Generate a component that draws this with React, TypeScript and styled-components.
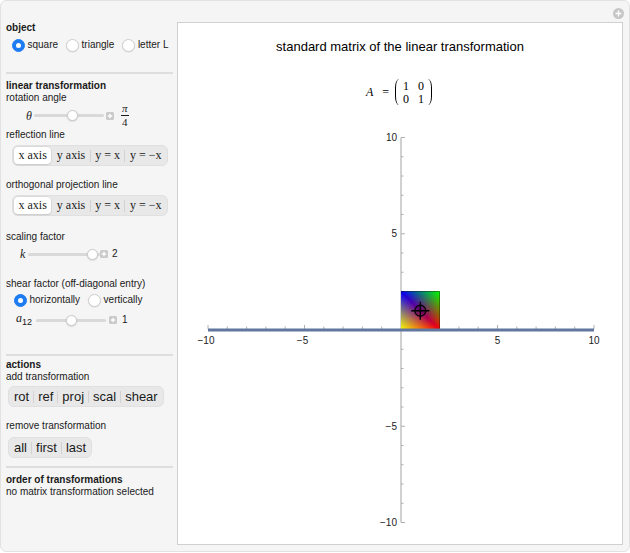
import React from 'react';
import styled, { createGlobalStyle } from 'styled-components';

/*
 * Global
 */
const GlobalStyle = createGlobalStyle`
  html, body {
    margin: 0;
    padding: 0;
    background: #ffffff;
  }
  body {
    font-family: "Liberation Sans", Arial, sans-serif;
    color: #1a1a1a;
  }
`;

const SERIF = '"Liberation Serif", "Times New Roman", serif';

/*
 * Frame
 */
const Frame = styled.div`
  width: 628px;
  height: 550px;
  background: #f5f5f5;
  border: 1px solid #e2e2e2;
  border-radius: 6px;
  display: flex;
  flex-direction: column;
  overflow: hidden;
`;

const TopBar = styled.div`
  height: 20px;
  display: flex;
  justify-content: flex-end;
  align-items: flex-start;
  padding: 7px 5px 0 0;
  box-sizing: border-box;
`;

const Body = styled.div`
  display: flex;
  align-items: flex-start;
`;

/*
 * Left controls
 */
const LeftPanel = styled.div`
  width: 176px;
  box-sizing: border-box;
  padding: 0 4px 0 5px;
  display: flex;
  flex-direction: column;
`;

const Label = styled.div<{ $mt?: number; $bold?: boolean }>`
  margin-top: ${(p) => p.$mt ?? 0}px;
  font-size: 10px;
  line-height: 12px;
  font-weight: ${(p) => (p.$bold ? 700 : 400)};
  white-space: nowrap;
`;

const Divider = styled.div<{ $mt: number }>`
  margin-top: ${(p) => p.$mt}px;
  height: 2px;
  background: #dedede;
`;

const RadioRow = styled.div<{ $mt: number; $indent: number }>`
  display: flex;
  align-items: center;
  gap: 8px;
  height: 14px;
  margin-top: ${(p) => p.$mt}px;
  padding-left: ${(p) => p.$indent}px;
`;

const RadioItem = styled.label`
  display: flex;
  align-items: center;
  gap: 2.5px;
  font-size: 10px;
  line-height: 12px;
`;

const RadioDot = styled.span<{ $on?: boolean }>`
  width: 13px;
  height: 13px;
  box-sizing: border-box;
  border-radius: 50%;
  background: ${(p) => (p.$on ? '#1d7cf2' : '#ffffff')};
  border: 1px solid ${(p) => (p.$on ? '#1d7cf2' : '#cfcfcf')};
  box-shadow: ${(p) => (p.$on ? 'none' : '0 0.5px 1px rgba(0,0,0,0.12)')};
  display: flex;
  align-items: center;
  justify-content: center;
  &::after {
    content: '';
    width: 5px;
    height: 5px;
    border-radius: 50%;
    background: #ffffff;
    display: ${(p) => (p.$on ? 'block' : 'none')};
  }
`;

const SliderRow = styled.div<{ $mt: number; $indent: number; $h: number }>`
  display: flex;
  align-items: center;
  height: ${(p) => p.$h}px;
  margin-top: ${(p) => p.$mt}px;
  padding-left: ${(p) => p.$indent}px;
`;

const VarLabel = styled.span<{ $w: number }>`
  width: ${(p) => p.$w}px;
  font-family: ${SERIF};
  font-style: italic;
  font-size: 12px;
  line-height: 14px;
  white-space: nowrap;
`;

const Sub = styled.sub`
  font-family: "Liberation Sans", Arial, sans-serif;
  font-style: normal;
  font-size: 9px;
  vertical-align: -3px;
`;

const Track = styled.div<{ $w: number }>`
  position: relative;
  width: ${(p) => p.$w}px;
  height: 3px;
  background: #d9d9d9;
  border-radius: 2px;
`;

const Thumb = styled.span`
  position: absolute;
  top: 50%;
  width: 11px;
  height: 11px;
  margin: -5.5px 0 0 -5.5px;
  box-sizing: border-box;
  border-radius: 50%;
  background: #ffffff;
  border: 1px solid #cbcbcb;
  box-shadow: 0 0.5px 1.5px rgba(0, 0, 0, 0.18);
`;

const PlusBox = styled.span<{ $ml: number }>`
  margin-left: ${(p) => p.$ml}px;
  width: 8px;
  height: 8px;
  display: flex;
`;

const Value = styled.span<{ $ml: number }>`
  margin-left: ${(p) => p.$ml}px;
  font-size: 10px;
  line-height: 12px;
`;

const Fraction = styled.span`
  display: inline-flex;
  flex-direction: column;
  align-items: center;
  font-family: ${SERIF};
  font-size: 11px;
  line-height: 11px;
`;

const FracTop = styled.span`
  font-style: italic;
  padding: 0 1px 1px;
  border-bottom: 1px solid #1a1a1a;
`;

const FracBottom = styled.span`
  padding-top: 1px;
`;

const SegGroup = styled.div<{ $mt: number; $ml: number }>`
  display: inline-flex;
  align-self: flex-start;
  align-items: center;
  margin-top: ${(p) => p.$mt}px;
  margin-left: ${(p) => p.$ml}px;
  height: 21px;
  box-sizing: border-box;
  padding: 1px;
  background: #e8e8e8;
  border: 1px solid #e0e0e0;
  border-radius: 6px;
`;

const Seg = styled.span<{ $on?: boolean; $serif?: boolean }>`
  height: 17px;
  box-sizing: border-box;
  display: flex;
  align-items: center;
  padding: 0 ${(p) => (p.$serif ? 4.5 : 4)}px;
  font-family: ${(p) => (p.$serif ? SERIF : '"Liberation Sans", Arial, sans-serif')};
  font-size: ${(p) => (p.$serif ? 12 : 13)}px;
  color: #1a1a1a;
  white-space: nowrap;
  background: ${(p) => (p.$on ? '#ffffff' : 'transparent')};
  border-radius: 4px;
  box-shadow: ${(p) => (p.$on ? '0 0 0 0.5px #cfcfcf, 0 1px 1.5px rgba(0,0,0,0.15)' : 'none')};
`;

const SegSep = styled.span<{ $hide?: boolean }>`
  width: 1px;
  height: 12px;
  background: ${(p) => (p.$hide ? 'transparent' : '#d2d2d2')};
`;

/*
 * Plot panel
 */
const PlotPanel = styled.div`
  width: 446px;
  height: 523px;
  margin-top: 1px;
  box-sizing: border-box;
  background: #ffffff;
  border: 1px solid #d0d0d0;
  display: flex;
  flex-direction: column;
`;

const Title = styled.div`
  margin-top: 16px;
  text-align: center;
  font-size: 13px;
  line-height: 16px;
  color: #000000;
`;

const MatrixRow = styled.div`
  margin-top: 24px;
  height: 26px;
  display: flex;
  justify-content: center;
  align-items: center;
  font-family: ${SERIF};
  font-size: 12px;
  color: #000000;
  padding-right: 2px;
`;

const MatName = styled.span`
  font-style: italic;
`;

const Equals = styled.span`
  margin: 0 6px 0 9px;
`;

const Paren = styled.span<{ $right?: boolean }>`
  width: 4px;
  height: 26px;
  box-sizing: border-box;
  border: 0 solid #000000;
  ${(p) => (p.$right ? 'border-right-width: 1px;' : 'border-left-width: 1px;')}
  border-radius: ${(p) => (p.$right ? '0 6px 6px 0 / 0 13px 13px 0' : '6px 0 0 6px / 13px 0 0 13px')};
`;

const MatGrid = styled.span`
  display: grid;
  grid-template-columns: auto auto;
  column-gap: 9px;
  row-gap: 1px;
  line-height: 12px;
  padding: 0 4px 0 4px;
`;

const Chart = styled.svg`
  display: block;
  margin-top: 16px;
`;

const ScreenRect = styled.rect`
  mix-blend-mode: screen;
`;

const ScreenPoly = styled.polygon`
  mix-blend-mode: screen;
`;

/*
 * Helpers
 */
const PlusIcon = () => (
  <svg width="8" height="8" viewBox="0 0 8 8">
    <rect width="8" height="8" rx="1.5" fill="#cacaca" />
    <path d="M4 1.8v4.4M1.8 4h4.4" stroke="#fff" strokeWidth="1.3" />
  </svg>
);

const CornerIcon = () => (
  <svg width="11" height="11" viewBox="0 0 11 11">
    <circle cx="5.5" cy="5.5" r="5.5" fill="#c6c6c6" />
    <path d="M5.5 2.6v5.8M2.6 5.5h5.8" stroke="#fff" strokeWidth="1.5" />
  </svg>
);

type SliderProps = {
  mt: number;
  h?: number;
  indent: number;
  label: React.ReactNode;
  labelWidth: number;
  trackWidth: number;
  pos: number;
  plusGap: number;
  valueGap: number;
  value: React.ReactNode;
};

const Slider = (props: SliderProps) => (
  <SliderRow $mt={props.mt} $indent={props.indent} $h={props.h ?? 14}>
    <VarLabel $w={props.labelWidth}>{props.label}</VarLabel>
    <Track $w={props.trackWidth}>
      <Thumb style={{ left: `${props.pos * 100}%` }} />
    </Track>
    <PlusBox $ml={props.plusGap}><PlusIcon /></PlusBox>
    <Value $ml={props.valueGap}>{props.value}</Value>
  </SliderRow>
);

const Segmented = ({ items, selected, serif, mt, ml }: {
  items: string[]; selected?: number; serif?: boolean; mt: number; ml: number;
}) => (
  <SegGroup $mt={mt} $ml={ml}>
    {items.map((x, i) => (
      <React.Fragment key={x}>
        {i > 0 && <SegSep $hide={selected !== undefined && (i === selected || i - 1 === selected)} />}
        <Seg $on={i === selected} $serif={serif}>{x}</Seg>
      </React.Fragment>
    ))}
  </SegGroup>
);

/*
 * Chart
 */
const OX = 223;
const OY = 209;
const SX = 19.3;
const SY = 19.25;
const X = (v: number) => OX + v * SX;
const Y = (v: number) => OY - v * SY;
const range = Array.from({ length: 21 }, (_, i) => i - 10);

const Plot = () => {
  const w = 2 * SX;
  const h = 2 * SY;
  const x0 = X(0);
  const y0 = Y(2);
  const cx = X(1);
  const cy = Y(1);
  return (
    <Chart width="444" height="416" viewBox="0 0 444 416">
      <defs>
        <linearGradient id="gR" x1="0" y1="0" x2="0" y2="1">
          <stop offset="0" stopColor="#000" />
          <stop offset="1" stopColor="#f00" />
        </linearGradient>
        <linearGradient id="gG" x1="1" y1="0" x2="0" y2="1">
          <stop offset="0" stopColor="#0f0" />
          <stop offset="0.5" stopColor="#000" />
          <stop offset="1" stopColor="#0f0" />
        </linearGradient>
        <linearGradient id="gBx" x1="0" y1="0" x2="1" y2="0">
          <stop offset="0" stopColor="#00f" />
          <stop offset="1" stopColor="#000" />
        </linearGradient>
        <linearGradient id="gBy" x1="0" y1="0" x2="0" y2="1">
          <stop offset="0" stopColor="#00f" />
          <stop offset="1" stopColor="#000" />
        </linearGradient>
      </defs>

      {/* y axis */}
      <line x1={OX} y1={Y(10)} x2={OX} y2={Y(-10)} stroke="#a3a3a3" strokeWidth="1" />
      {range.filter((v) => v !== 0).map((v) => (
        <line key={`yt${v}`} x1={OX} y1={Y(v)} x2={OX + (v % 5 === 0 ? 4 : 2.5)} y2={Y(v)}
          stroke="#b0b0b0" strokeWidth="1" />
      ))}
      {[10, 5, -5, -10].map((v) => (
        <text key={`yl${v}`} x={OX - 4} y={Y(v) + 3.5} textAnchor="end" fontSize="10"
          fontFamily='"Liberation Sans", Arial, sans-serif' fill="#222">
          {v < 0 ? `−${-v}` : v}
        </text>
      ))}

      {/* x axis ticks */}
      {range.filter((v) => v !== 0).map((v) => (
        <line key={`xt${v}`} x1={X(v)} y1={OY - 1} x2={X(v)} y2={OY - (v % 5 === 0 ? 5 : 3.5)}
          stroke="#b0b0b0" strokeWidth="1" />
      ))}
      {[-10, -5, 5, 10].map((v) => (
        <text key={`xl${v}`} x={X(v) - (v < 0 ? 2 : 0)} y={OY + 14} textAnchor="middle" fontSize="10"
          fontFamily='"Liberation Sans", Arial, sans-serif' fill="#222">
          {v < 0 ? `−${-v}` : v}
        </text>
      ))}

      {/* coloured square */}
      <g style={{ isolation: 'isolate' }}>
        <rect x={x0} y={y0} width={w} height={h} fill="#000" />
        <ScreenRect x={x0} y={y0} width={w} height={h} fill="url(#gR)" />
        <ScreenRect x={x0} y={y0} width={w} height={h} fill="url(#gG)" />
        <ScreenPoly points={`${x0},${y0} ${x0 + w},${y0} ${x0 + w},${y0 + h}`} fill="url(#gBx)" />
        <ScreenPoly points={`${x0},${y0} ${x0},${y0 + h} ${x0 + w},${y0 + h}`} fill="url(#gBy)" />
      </g>

      {/* transformed x axis */}
      <line x1={X(-10)} y1={OY} x2={X(10)} y2={OY} stroke="#62779d" strokeWidth="3" />

      {/* crosshair */}
      <circle cx={cx} cy={cy} r="5.5" fill="rgba(0,0,0,0.12)" stroke="#000" strokeWidth="1.3" />
      <path d={`M${cx - 9} ${cy}H${cx + 9}M${cx} ${cy - 9}V${cy + 9}`} stroke="#000" strokeWidth="1.3" />
    </Chart>
  );
};

/*
 * App
 */
const reflectItems = ['x axis', 'y axis', 'y = x', 'y = −x'];

export default function App() {
  return (
    <>
      <GlobalStyle />
      <Frame>
        <TopBar><CornerIcon /></TopBar>
        <Body>
          <LeftPanel>
            <Label $mt={1} $bold>object</Label>
            <RadioRow $mt={4} $indent={6}>
              <RadioItem><RadioDot $on />square</RadioItem>
              <RadioItem><RadioDot />triangle</RadioItem>
              <RadioItem><RadioDot />letter L</RadioItem>
            </RadioRow>

            <Divider $mt={20} />

            <Label $mt={6} $bold>linear transformation</Label>
            <Label>rotation angle</Label>
            <Slider
              mt={0} h={23} indent={20} label="θ" labelWidth={8} trackWidth={70} pos={0.543}
              plusGap={2} valueGap={7}
              value={<Fraction><FracTop>π</FracTop><FracBottom>4</FracBottom></Fraction>}
            />

            <Label $mt={2}>reflection line</Label>
            <Segmented mt={4} ml={6} items={reflectItems} selected={0} serif />

            <Label $mt={13}>orthogonal projection line</Label>
            <Segmented mt={4} ml={6} items={reflectItems} selected={0} serif />

            <Label $mt={15}>scaling factor</Label>
            <Slider
              mt={4} indent={14} label="k" labelWidth={8} trackWidth={72} pos={0.89}
              plusGap={0} valueGap={4} value="2"
            />

            <Label $mt={17}>shear factor (off-diagonal entry)</Label>
            <RadioRow $mt={3} $indent={8}>
              <RadioItem><RadioDot $on />horizontally</RadioItem>
              <RadioItem><RadioDot />vertically</RadioItem>
            </RadioRow>
            <Slider
              mt={6} indent={10} label={<>a<Sub>12</Sub></>} labelWidth={20} trackWidth={70} pos={0.5}
              plusGap={3} valueGap={5} value="1"
            />

            <Divider $mt={27} />

            <Label $mt={3} $bold>actions</Label>
            <Label>add transformation</Label>
            <Segmented mt={3} ml={2} items={['rot', 'ref', 'proj', 'scal', 'shear']} />

            <Label $mt={13}>remove transformation</Label>
            <Segmented mt={5} ml={2} items={['all', 'first', 'last']} />

            <Divider $mt={8} />

            <Label $mt={6} $bold>order of transformations</Label>
            <Label>no matrix transformation selected</Label>
          </LeftPanel>

          <PlotPanel>
            <Title>standard matrix of the linear transformation</Title>
            <MatrixRow>
              <MatName>A</MatName>
              <Equals>=</Equals>
              <Paren />
              <MatGrid>
                <span>1</span><span>0</span>
                <span>0</span><span>1</span>
              </MatGrid>
              <Paren $right />
            </MatrixRow>
            <Plot />
          </PlotPanel>
        </Body>
      </Frame>
    </>
  );
}
